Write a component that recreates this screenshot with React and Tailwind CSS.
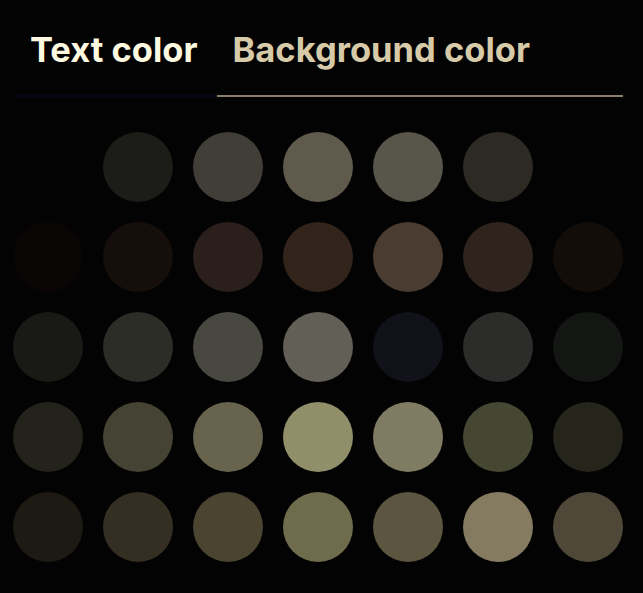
const swatches = [
  ['#040404', '#1c1c18', '#403e36', '#5f5a4c', '#58564a', '#2c2a22', '#040404'],
  ['#0a0505', '#150e0b', '#2a1f1a', '#33241b', '#4a3c30', '#2f231d', '#130d0a'],
  ['#191915', '#2c2d27', '#484840', '#625f56', '#11111a', '#2c2c2a', '#141614'],
  ['#23231b', '#454434', '#67634c', '#918e6a', '#807c63', '#464733', '#25251c'],
  ['#1c1a12', '#352e22', '#4a4431', '#6f6c4d', '#5c5640', '#857b61', '#4f4838'],
];

export default function App() {
  return (
    <div className="min-h-[593px] bg-[#030303] pl-[13px] pr-[20px] font-['Inter',sans-serif]">
      {/* Tabs */}
      <div className="flex">
        <button className="pl-[17px] pr-[19px] pt-[29px] pb-[24px] border-b-2 border-[#05051a] text-[34.5px] leading-[42px] font-bold text-[#fcf9e0]">
          Text color
        </button>
        <button className="flex-1 text-left px-[16px] pt-[29px] pb-[24px] border-b-2 border-[#8a7f69] text-[34.5px] leading-[42px] font-bold text-[#d7caa8]">
          Background color
        </button>
      </div>

      {/* Swatches */}
      <div className="mt-[35px] grid grid-cols-[repeat(7,70px)] gap-[20px]">
        {swatches.flat().map((c, i) => (
          <button
            key={i}
            className="size-[70px] rounded-full"
            style={{ backgroundColor: c }}
          />
        ))}
      </div>
    </div>
  );
}
